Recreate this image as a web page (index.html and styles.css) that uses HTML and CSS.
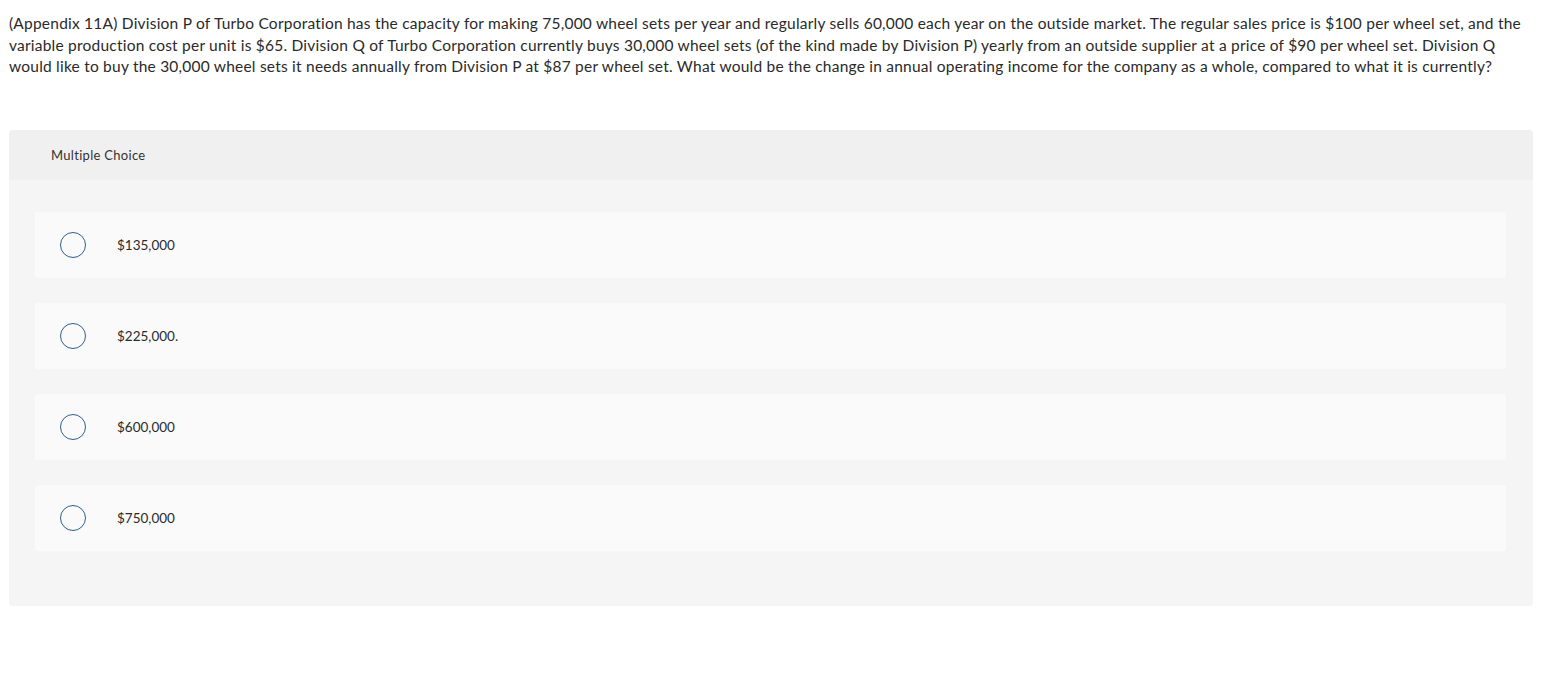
FILE: index.html
```html
<!DOCTYPE html>
<html>
<head>
<meta charset="utf-8">
<link rel="stylesheet" href="styles.css">
</head>
<body>
<p class="question">(Appendix 11A) Division P of Turbo Corporation has the capacity for making 75,000 wheel sets per year and regularly sells 60,000 each year on the outside market. The regular sales price is $100 per wheel set, and the<br>variable production cost per unit is $65. Division Q of Turbo Corporation currently buys 30,000 wheel sets (of the kind made by Division P) yearly from an outside supplier at a price of $90 per wheel set. Division Q<br>would like to buy the 30,000 wheel sets it needs annually from Division P at $87 per wheel set. What would be the change in annual operating income for the company as a whole, compared to what it is currently?</p>
<div class="mc">
  <div class="mc-head">Multiple Choice</div>
  <div class="mc-body">
    <div class="opt"><span class="radio"></span><span class="label">$135,000</span></div>
    <div class="opt"><span class="radio"></span><span class="label">$225,000.</span></div>
    <div class="opt"><span class="radio"></span><span class="label">$600,000</span></div>
    <div class="opt"><span class="radio"></span><span class="label">$750,000</span></div>
  </div>
</div>
</body>
</html>
```
FILE: styles.css
```css
html, body { margin: 0; background: #fff; }
body {
  padding: 8px 35px 0 9px;
  font-family: Lato, "Open Sans", sans-serif;
  color: #2a2a2a;
}
.question {
  margin: 5px 0 0;
  font-size: 15.5px;
  letter-spacing: 0.22px;
  line-height: 21.5px;
  white-space: nowrap;
}
.mc {
  margin-top: 52px;
  width: 1524px;
  border-radius: 4px;
  overflow: hidden;
  background: #f5f5f5;
}
.mc-head {
  height: 50px;
  background: #f0f0f0;
  display: flex;
  align-items: center;
  padding-left: 42px;
  font-size: 13px;
  letter-spacing: 0.3px;
  color: #333;
}
.mc-body {
  display: flex;
  flex-direction: column;
  gap: 25px;
  padding: 32px 27px 55px 26px;
}
.opt {
  height: 66px;
  background: #fafafa;
  border-radius: 3px;
  display: flex;
  align-items: center;
  padding-left: 25px;
}
.radio {
  width: 24px;
  height: 24px;
  border: 1.5px solid #2e5f8e;
  border-radius: 50%;
  flex: none;
}
.label {
  margin-left: 31px;
  font-size: 13.5px;
  color: #2a2a2a;
}
```
